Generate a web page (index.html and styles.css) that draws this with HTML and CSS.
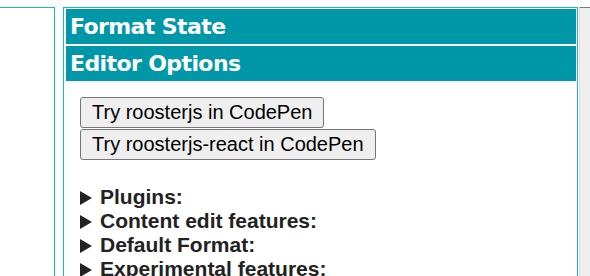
FILE: index.html
```html
<!DOCTYPE html>
<html>
<head>
<meta charset="utf-8">
<link rel="stylesheet" href="styles.css">
</head>
<body>
<div class="page">
  <div class="side-panel"></div>
  <div class="options-panel">
    <div class="pane-header">Format State</div>
    <div class="pane-header">Editor Options</div>
    <div class="pane-body">
      <div class="buttons">
        <button class="btn">Try roosterjs in CodePen</button>
        <button class="btn">Try roosterjs-react in CodePen</button>
      </div>
      <div class="sections">
        <details><summary>Plugins:</summary></details>
        <details><summary>Content edit features:</summary></details>
        <details><summary>Default Format:</summary></details>
        <details><summary>Experimental features:</summary></details>
      </div>
    </div>
  </div>
  <div class="resizer"></div>
</div>
</body>
</html>
```
FILE: styles.css
```css
html, body {
  margin: 0;
  padding: 0;
  background: #ffffff;
  overflow: hidden;
  height: 276px;
}
.page {
  display: flex;
  align-items: flex-start;
  padding-top: 7px;
}
.side-panel {
  width: 54px;
  height: 320px;
  border-top: 1px solid #1ab6c9;
  border-right: 1px solid #1ab6c9;
  flex: none;
}
.options-panel {
  margin-left: 8px;
  width: 511px;
  height: 320px;
  border: 1px solid #1ab6c9;
  padding: 1px 0 0 2px;
  box-sizing: content-box;
  flex: none;
  display: flex;
  flex-direction: column;
  gap: 2px;
}
.pane-header {
  background: #0097a8;
  color: #ffffff;
  font-family: "DejaVu Sans", Verdana, sans-serif;
  font-weight: bold;
  font-size: 22px;
  letter-spacing: -0.6px;
  height: 35px;
  line-height: 36px;
  padding-left: 4px;
  margin-right: 1px;
  white-space: nowrap;
}
.pane-body {
  padding: 14px 0 0 14px;
}
.buttons {
  display: flex;
  flex-direction: column;
  align-items: flex-start;
  gap: 1px;
}
.btn {
  font-family: "Liberation Sans", Arial, sans-serif;
  font-size: 20px;
  line-height: 23px;
  color: #000000;
  background: #efefef;
  border: 1px solid #767676;
  border-radius: 3px;
  padding: 3px 11px;
  margin: 0;
}
.sections {
  margin-top: 25px;
  font-family: "Liberation Sans", Arial, sans-serif;
  font-size: 21px;
  font-weight: bold;
  line-height: 24px;
  color: #222222;
}
.sections summary {
  list-style: none;
  display: flex;
  align-items: center;
  cursor: pointer;
}
.sections summary::-webkit-details-marker {
  display: none;
}
.sections summary::before {
  content: "";
  width: 0;
  height: 0;
  border-top: 7px solid transparent;
  border-bottom: 7px solid transparent;
  border-left: 12px solid #222222;
  margin-right: 8px;
  margin-top: 1px;
}
.resizer {
  margin-left: 1px;
  flex: 1;
  height: 320px;
  background: #efefef;
  border-top: 1px solid #7a7a7a;
  border-left: 1px solid #dcdcdc;
}
```
